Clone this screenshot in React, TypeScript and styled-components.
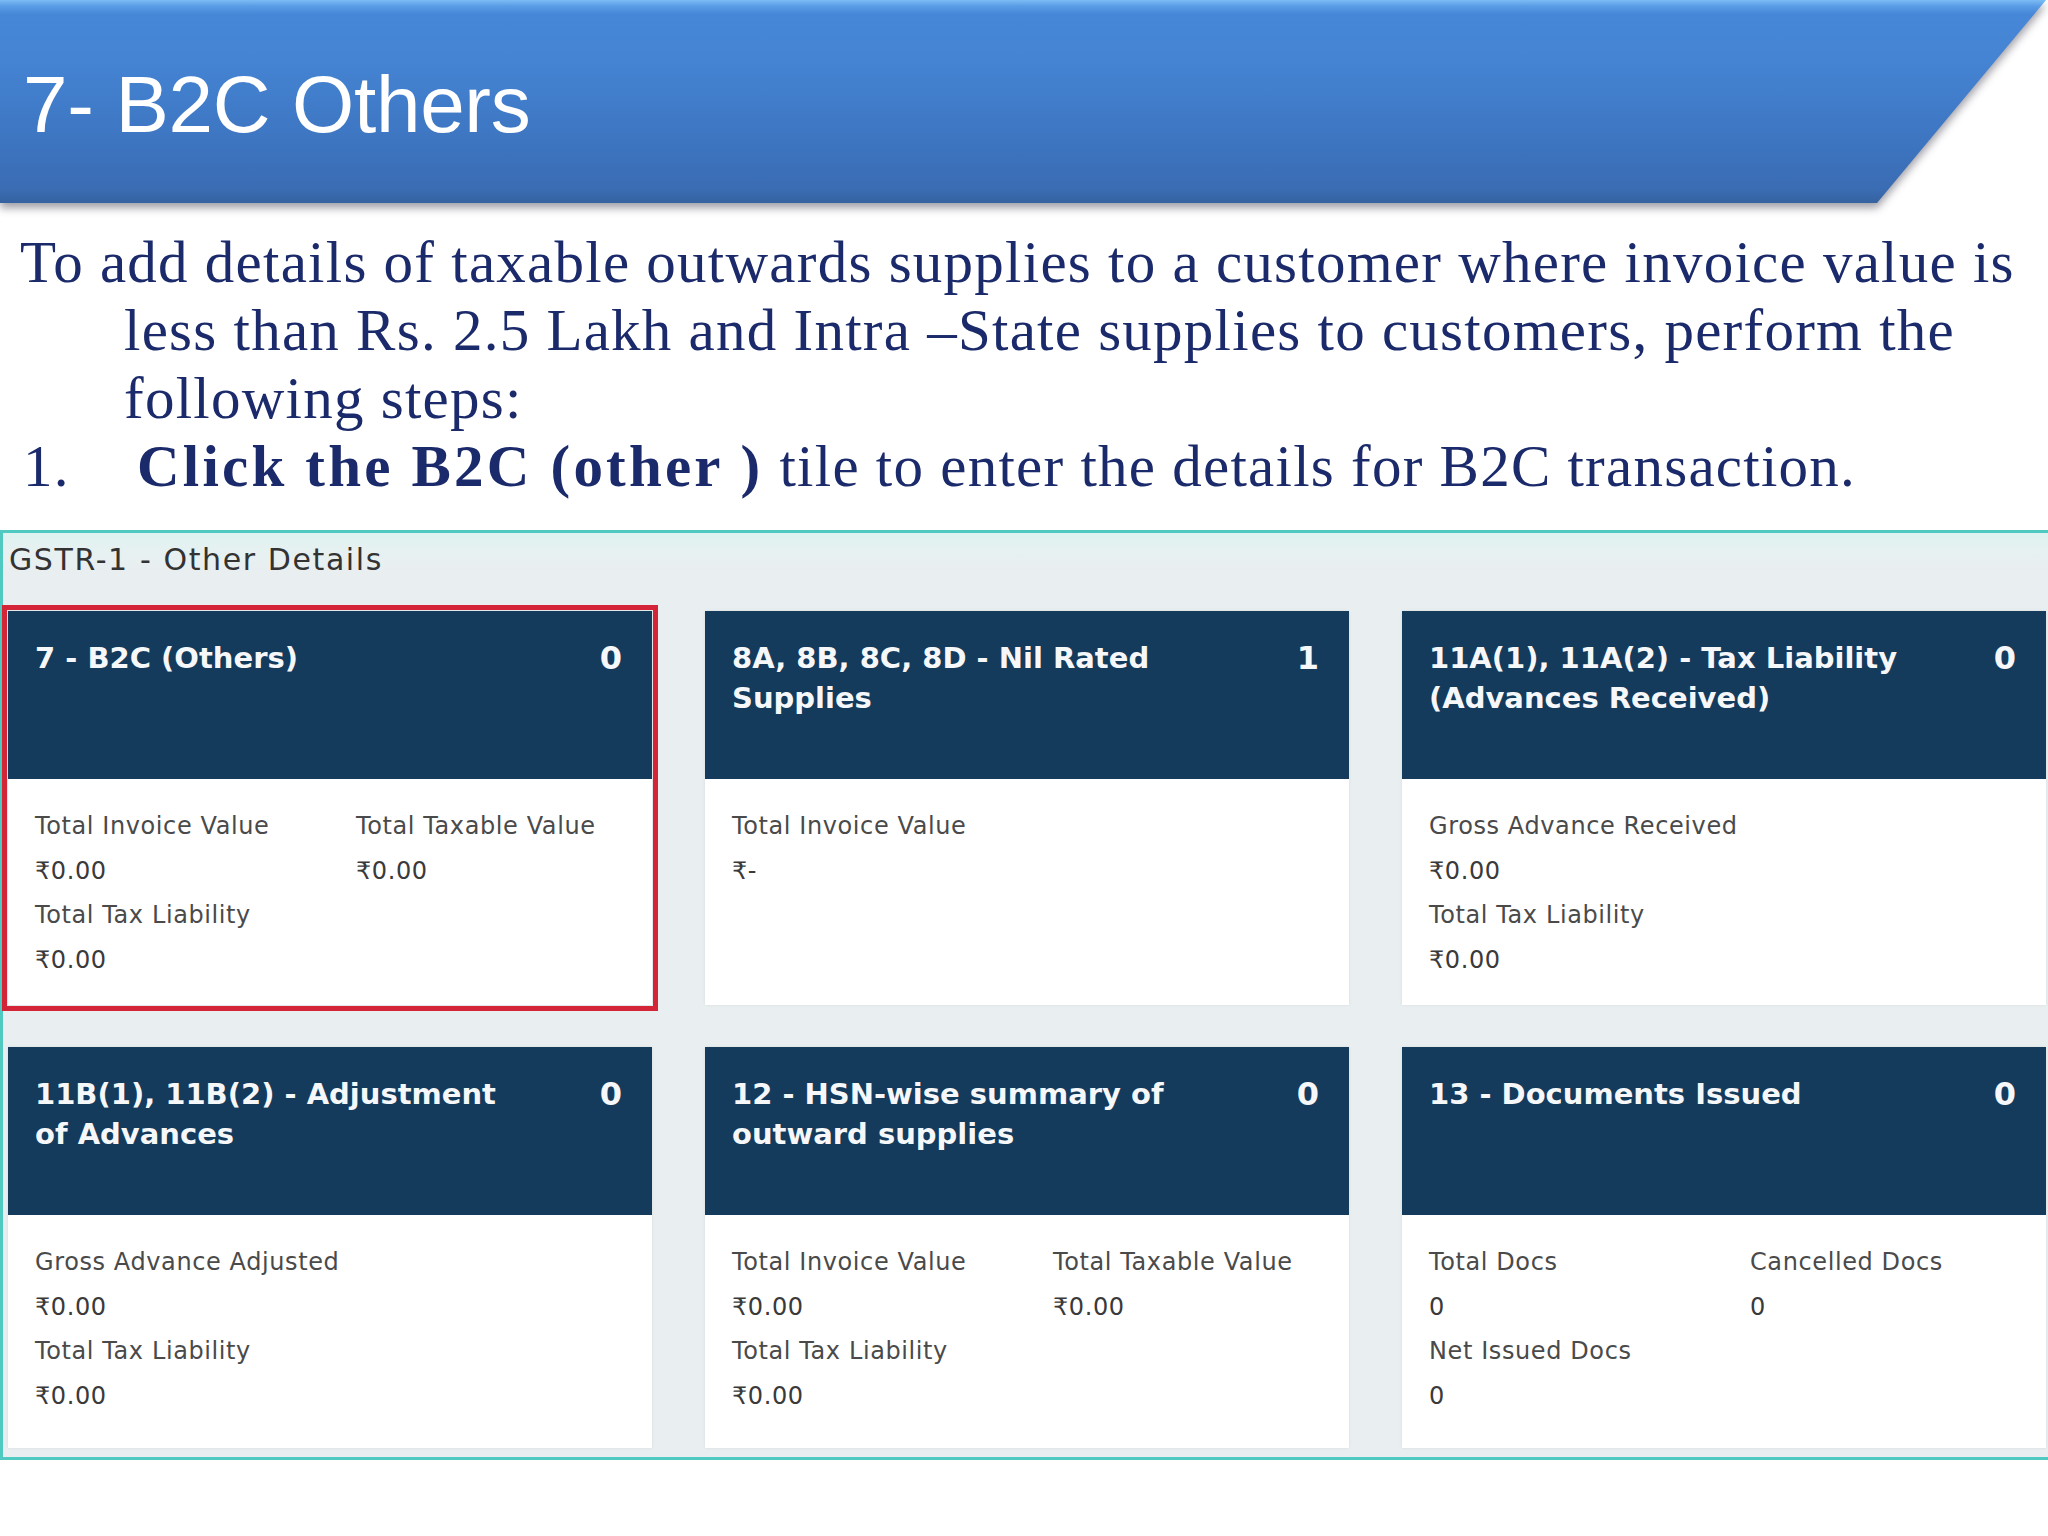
import React, { FC } from 'react';
import styled, { createGlobalStyle } from 'styled-components';

const GlobalStyle = createGlobalStyle`
    html, body {
        margin: 0;
        padding: 0;
        background: #ffffff;
    }
    body {
        width: 2048px;
        overflow: hidden;
    }
`;

const Page = styled.div`
    width: 2048px;
    height: 1536px;
    overflow: hidden;
    background: #ffffff;
`;

// slide title ribbon: the slanted blue shape is a drawing, the text sits on it
const BannerShadow = styled.div`
    filter: drop-shadow(0 5px 4px rgba(40, 40, 60, 0.45));
`;

const Banner = styled.header`
    height: 203px;
    clip-path: polygon(0 0, 2046px 0, 1877px 100%, 0 100%);
    background: linear-gradient(
        to bottom,
        #7cbcf4 0px,
        #5a9de6 6px,
        #4787d7 14px,
        #4484d3 60px,
        #3f79c6 120px,
        #3a6cb3 190px,
        #35629f 203px
    );
    box-sizing: border-box;
    padding: 65px 0 0 23px;
`;

const BannerTitle = styled.h1`
    margin: 0;
    font-family: 'Liberation Sans', Arial, sans-serif;
    font-weight: 400;
    font-size: 80px;
    line-height: 80px;
    color: #ffffff;
    letter-spacing: -0.3px;
`;

const Intro = styled.section`
    margin-top: 25px;
    font-family: 'Liberation Serif', 'Times New Roman', serif;
    font-size: 59px;
    line-height: 68px;
    color: #1b2a6b;
`;

const Lead = styled.p`
    margin: 0;
    padding-left: 124px;
    text-indent: -104px;
    white-space: nowrap;
    letter-spacing: 1.25px;
`;

const Step = styled.div`
    display: flex;
    white-space: nowrap;
    letter-spacing: 1.25px;
`;

const StepNo = styled.span`
    width: 137px;
    padding-left: 23px;
    box-sizing: border-box;
    flex: none;
`;

const Strong = styled.b`
    font-weight: 700;
    letter-spacing: 3.2px;
`;

const Panel = styled.div`
    margin-top: 30px;
    border-top: 3px solid #50c9c1;
    border-left: 3px solid #50c9c1;
    border-bottom: 3px solid #50c9c1;
    background: linear-gradient(to bottom, #def3f0 0px, #e7f1f1 18px, #e9eef0 40px);
    padding: 0 0 9px 5px;
`;

const PanelTitle = styled.div`
    font-family: 'DejaVu Sans', Verdana, sans-serif;
    font-size: 30px;
    line-height: 36px;
    color: #333333;
    padding: 9px 0 0 1px;
    letter-spacing: 1.6px;
`;

const TileGrid = styled.div`
    margin-top: 33px;
    display: grid;
    grid-template-columns: repeat(3, 644px);
    grid-template-rows: 394px 401px;
    column-gap: 53px;
    row-gap: 42px;
`;

const Tile = styled.div<{ $active?: boolean }>`
    display: flex;
    flex-direction: column;
    background: #ffffff;
    box-shadow: 0 0 3px rgba(0, 0, 0, 0.08);
    outline: ${(p) => (p.$active ? '5px solid #d42538' : 'none')};
    outline-offset: 1px;
    cursor: pointer;
`;

const TileHead = styled.div`
    height: 168px;
    flex: none;
    box-sizing: border-box;
    background: #143a5c;
    padding: 27px 30px 0 27px;
    display: flex;
    justify-content: space-between;
    align-items: flex-start;
    font-family: 'DejaVu Sans', Verdana, sans-serif;
    font-weight: 700;
    color: #f5f7f9;
`;

const TileTitle = styled.div`
    max-width: 488px;
    font-size: 29px;
    line-height: 40px;
`;

const TileCount = styled.div`
    font-size: 32px;
    line-height: 40px;
`;

const TileBody = styled.div`
    flex: 1;
    display: grid;
    grid-template-columns: 321px 1fr;
    align-content: start;
    padding: 25px 0 0 27px;
    font-family: 'DejaVu Sans', Verdana, sans-serif;
    font-size: 24px;
    line-height: 44.5px;
    letter-spacing: 0.6px;
`;

const Field = styled.div<{ $full?: boolean }>`
    grid-column: ${(p) => (p.$full ? '1 / -1' : 'auto')};
`;

const Label = styled.div`
    color: #4a4a4a;
`;

const Value = styled.div`
    color: #3a3a3a;
`;

interface FieldData {
    label: string;
    value: string;
    full?: boolean;
}

interface TileData {
    title: string;
    count: number;
    fields: FieldData[];
    active?: boolean;
}

const tiles: TileData[] = [
    {
        title: '7 - B2C (Others)',
        count: 0,
        active: true,
        fields: [
            { label: 'Total Invoice Value', value: '₹0.00' },
            { label: 'Total Taxable Value', value: '₹0.00' },
            { label: 'Total Tax Liability', value: '₹0.00' },
        ],
    },
    {
        title: '8A, 8B, 8C, 8D - Nil Rated Supplies',
        count: 1,
        fields: [{ label: 'Total Invoice Value', value: '₹-' }],
    },
    {
        title: '11A(1), 11A(2) - Tax Liability (Advances Received)',
        count: 0,
        fields: [
            { label: 'Gross Advance Received', value: '₹0.00', full: true },
            { label: 'Total Tax Liability', value: '₹0.00', full: true },
        ],
    },
    {
        title: '11B(1), 11B(2) - Adjustment of Advances',
        count: 0,
        fields: [
            { label: 'Gross Advance Adjusted', value: '₹0.00', full: true },
            { label: 'Total Tax Liability', value: '₹0.00', full: true },
        ],
    },
    {
        title: '12 - HSN-wise summary of outward supplies',
        count: 0,
        fields: [
            { label: 'Total Invoice Value', value: '₹0.00' },
            { label: 'Total Taxable Value', value: '₹0.00' },
            { label: 'Total Tax Liability', value: '₹0.00' },
        ],
    },
    {
        title: '13 - Documents Issued',
        count: 0,
        fields: [
            { label: 'Total Docs', value: '0' },
            { label: 'Cancelled Docs', value: '0' },
            { label: 'Net Issued Docs', value: '0' },
        ],
    },
];

const SummaryTile: FC<{ tile: TileData }> = ({ tile }) => (
    <Tile $active={tile.active}>
        <TileHead>
            <TileTitle>{tile.title}</TileTitle>
            <TileCount>{tile.count}</TileCount>
        </TileHead>
        <TileBody>
            {tile.fields.map((f, i) => (
                <Field key={i} $full={f.full}>
                    <Label>{f.label}</Label>
                    <Value>{f.value}</Value>
                </Field>
            ))}
        </TileBody>
    </Tile>
);

const App: FC = () => {
    return (
        <Page>
            <GlobalStyle />
            <BannerShadow>
                <Banner>
                    <BannerTitle>7- B2C Others</BannerTitle>
                </Banner>
            </BannerShadow>
            <Intro>
                <Lead>
                    To add details of taxable outwards supplies to a customer where invoice value is
                    <br />
                    less than Rs. 2.5 Lakh and Intra –State supplies to customers, perform the
                    <br />
                    following steps:
                </Lead>
                <Step>
                    <StepNo>1.</StepNo>
                    <span>
                        <Strong>Click the B2C (other )</Strong> tile to enter the details for B2C transaction.
                    </span>
                </Step>
            </Intro>
            <Panel>
                <PanelTitle>GSTR-1 - Other Details</PanelTitle>
                <TileGrid>
                    {tiles.map((t) => (
                        <SummaryTile key={t.title} tile={t} />
                    ))}
                </TileGrid>
            </Panel>
        </Page>
    );
};

export default App;
